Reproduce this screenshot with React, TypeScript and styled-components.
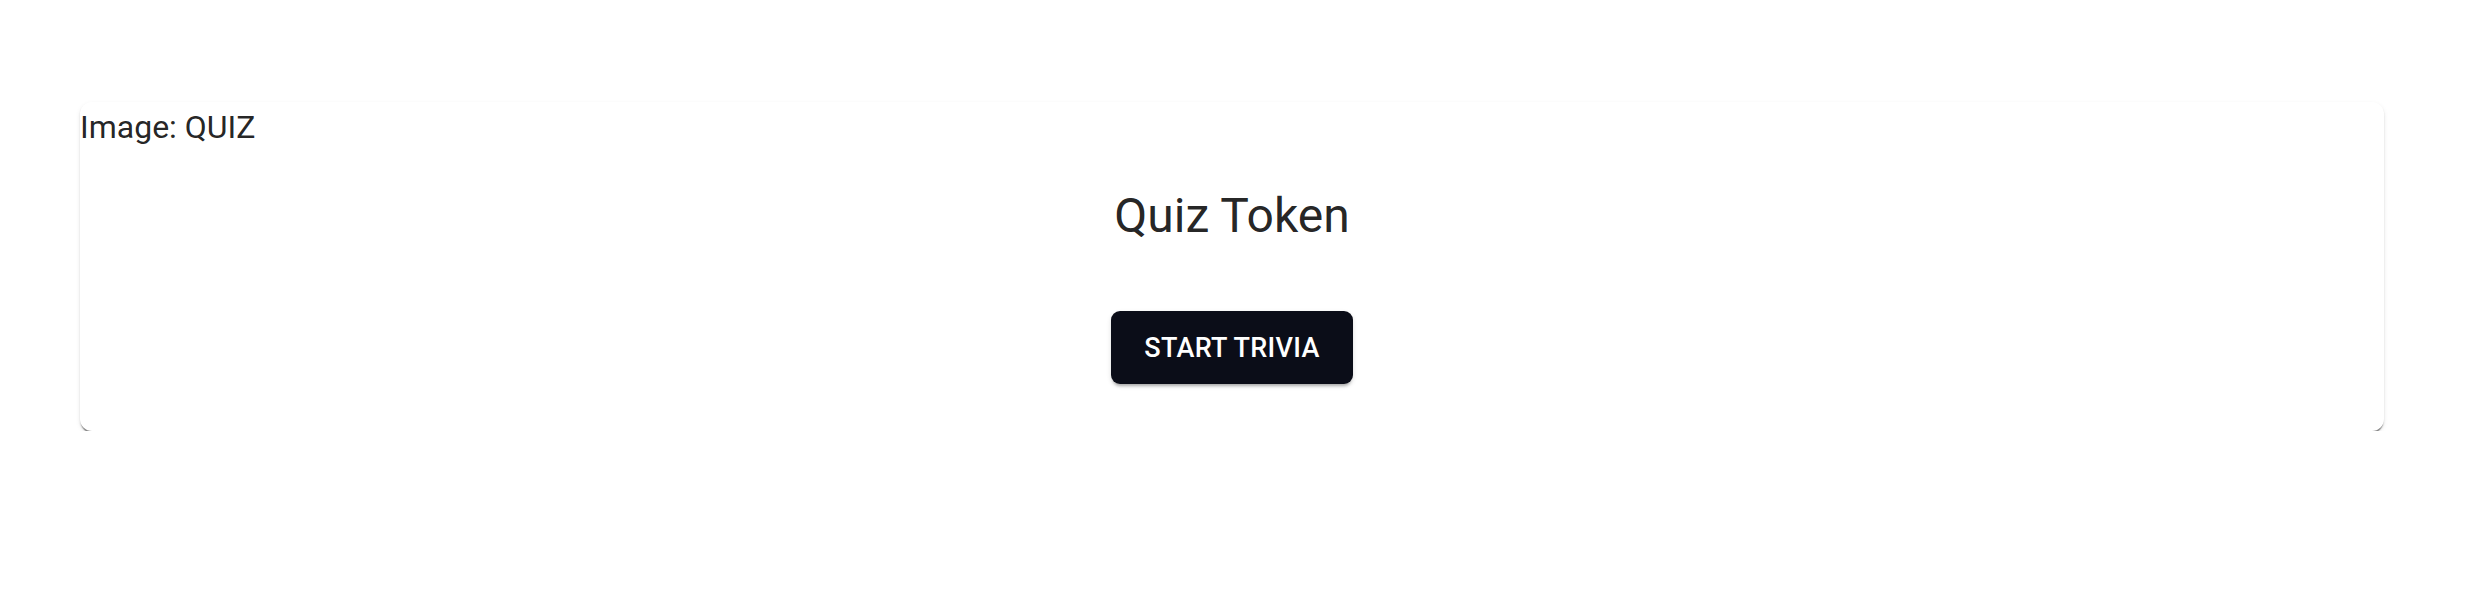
import React from "react";
import styled, { createGlobalStyle } from "styled-components";

const GlobalStyle = createGlobalStyle`
  body {
    margin: 0;
    background: #ffffff;
    font-family: Roboto, "Liberation Sans", sans-serif;
    color: rgba(0, 0, 0, 0.87);
  }
`;

const Page = styled.div`
  padding: 102px 88px 0 80px;
`;

const Card = styled.div`
  background: #ffffff;
  border-radius: 12px;
  box-shadow: 0 3px 1px -1px rgba(0, 0, 0, 0.4), 0 2px 2px 0 rgba(0, 0, 0, 0.12),
    0 2px 5px 0 rgba(0, 0, 0, 0.08);
  height: 329px;
  display: flex;
  flex-direction: column;
`;

const Cover = styled.div`
  font-size: 32px;
  line-height: 1.17;
  padding-top: 7px;
`;

const Body = styled.div`
  display: flex;
  flex-direction: column;
  align-items: center;
`;

const Title = styled.h2`
  margin: 41px 0 0;
  font-size: 48px;
  font-weight: 400;
  line-height: 1.2;
`;

const StartButton = styled.button`
  margin-top: 66px;
  width: 242px;
  height: 73px;
  border: none;
  border-radius: 9px;
  background: #0b0d18;
  color: #ffffff;
  font-family: Roboto, "Liberation Sans", sans-serif;
  font-size: 27px;
  font-weight: 500;
  letter-spacing: 0.3px;
  text-transform: uppercase;
  box-shadow: 0 4px 3px -2px rgba(0, 0, 0, 0.25), 0 2px 5px 0 rgba(0, 0, 0, 0.12);
  cursor: pointer;
`;

export default function App() {
  return (
    <>
      <GlobalStyle />
      <Page>
        <Card>
          <Cover>Image: QUIZ</Cover>
          <Body>
            <Title>Quiz Token</Title>
            <StartButton>Start Trivia</StartButton>
          </Body>
        </Card>
      </Page>
    </>
  );
}
